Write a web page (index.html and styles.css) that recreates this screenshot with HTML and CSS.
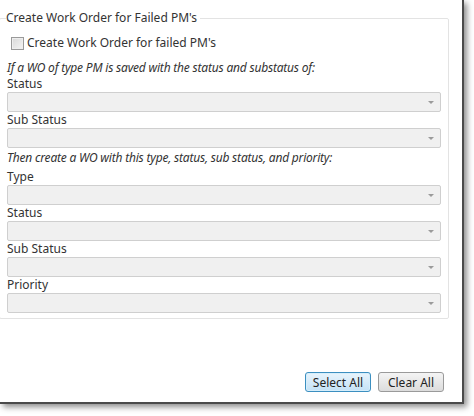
FILE: index.html
```html
<!DOCTYPE html>
<html>
<head>
<meta charset="utf-8">
<link rel="stylesheet" href="styles.css">
</head>
<body>
<div class="window">
  <fieldset class="group">
    <legend class="legend">Create Work Order for Failed PM's</legend>
    <label class="check-row"><span class="checkbox"></span><span>Create Work Order for failed PM's</span></label>
    <div class="note note-first">If a WO of type PM is saved with the status and substatus of:</div>
    <div class="field"><div class="label">Status</div><div class="select"><span class="arrow"></span></div></div>
    <div class="field"><div class="label">Sub Status</div><div class="select"><span class="arrow"></span></div></div>
    <div class="note">Then create a WO with this type, status, sub status, and priority:</div>
    <div class="field"><div class="label">Type</div><div class="select"><span class="arrow"></span></div></div>
    <div class="field"><div class="label">Status</div><div class="select"><span class="arrow"></span></div></div>
    <div class="field"><div class="label">Sub Status</div><div class="select"><span class="arrow"></span></div></div>
    <div class="field"><div class="label">Priority</div><div class="select"><span class="arrow"></span></div></div>
  </fieldset>
  <div class="footer">
    <button class="btn btn-primary">Select All</button>
    <button class="btn">Clear All</button>
  </div>
</div>
</body>
</html>
```

FILE: styles.css
```css
html, body {
  margin: 0;
  padding: 0;
  background: #ffffff;
}
body {
  font-family: "Noto Sans", "Open Sans", sans-serif;
  font-size: 12px;
  color: #333333;
  width: 474px;
  height: 416px;
  overflow: hidden;
}
.window {
  width: 462px;
  height: 402px;
  background: #ffffff;
  border-right: 2px solid #4a4a4a;
  border-bottom: 2px solid #4a4a4a;
  box-shadow: 3px 3px 6px rgba(0, 0, 0, 0.45);
  display: flex;
  flex-direction: column;
}
.group {
  margin: 10px 0 0 -1px;
  padding: 0 7px 5px 7px;
  width: 434px;
  border: 1px solid #e3e3e3;
  border-radius: 2px;
}
.legend {
  padding: 0 3px 0 0;
  margin-left: -1px;
  line-height: 16px;
  color: #333;
}
.check-row {
  display: flex;
  align-items: center;
  gap: 3px;
  margin: 10px 0 0 4px;
  height: 14px;
  line-height: 14px;
}
.checkbox {
  width: 11px;
  height: 11px;
  border: 1px solid #9a9a9a;
  background: linear-gradient(135deg, #d8d8d8, #f4f4f4);
  box-shadow: inset 0 0 0 1px #eeeeee;
}
.note {
  font-style: italic;
  line-height: 16px;
  letter-spacing: -0.2px;
  margin-top: 2px;
  margin-bottom: 3px;
}
.note-first {
  margin-top: 10px;
  margin-bottom: 0;
}
.label {
  line-height: 16px;
}
.select {
  height: 18px;
  border: 1px solid #cfcfcf;
  border-radius: 2px;
  background: #f0f0f0;
  display: flex;
  align-items: center;
  justify-content: flex-end;
  padding-right: 6px;
}
.arrow {
  width: 0;
  height: 0;
  border-left: 3px solid transparent;
  border-right: 3px solid transparent;
  border-top: 3px solid #9a9a9a;
}
.footer {
  margin-top: auto;
  margin-bottom: 10px;
  display: flex;
  justify-content: flex-end;
  gap: 7px;
  padding-right: 18px;
}
.btn {
  width: 66px;
  height: 20px;
  padding: 0;
  font-family: inherit;
  font-size: 12px;
  color: #222;
  border: 1px solid #9a9a9a;
  border-radius: 3px;
  background: linear-gradient(#f4f4f4, #dcdcdc);
}
.btn-primary {
  border-color: #3c8fc0;
  background: linear-gradient(#e8f4fc, #c4e2f6);
  box-shadow: inset 0 0 0 1px #d6eefb;
}
```
